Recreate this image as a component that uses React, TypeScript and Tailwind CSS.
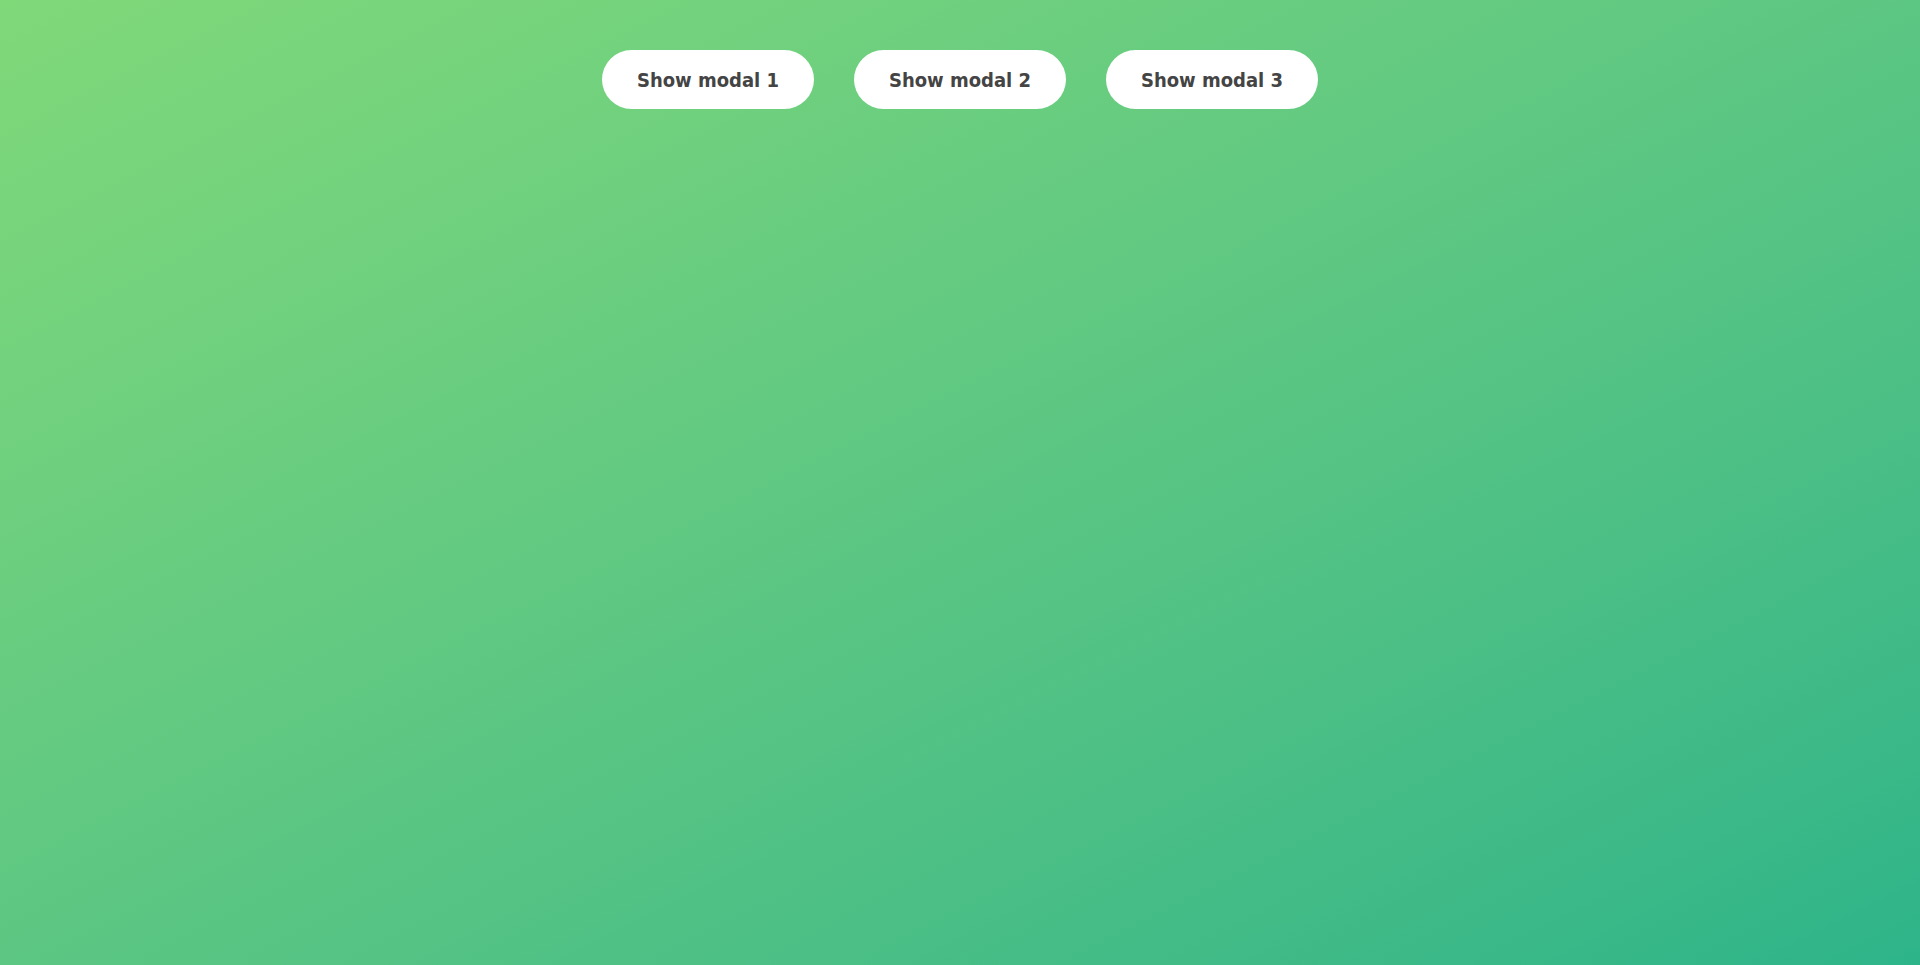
import React from "react"

function ModalButton({ label }: { label: string }) {
  return (
    <button className="h-[59px] w-[212px] rounded-full bg-white text-[20px] font-bold text-[#444444] [font-family:'DejaVu_Sans_Condensed','DejaVu_Sans',sans-serif]">
      {label}
    </button>
  )
}

export default function App() {
  return (
    <div className="min-h-[965px] w-full bg-gradient-to-br from-[#80d979] to-[#2db489]">
      <div className="flex flex-row justify-center gap-[40px] pt-[50px]">
        <ModalButton label="Show modal 1" />
        <ModalButton label="Show modal 2" />
        <ModalButton label="Show modal 3" />
      </div>
    </div>
  )
}
